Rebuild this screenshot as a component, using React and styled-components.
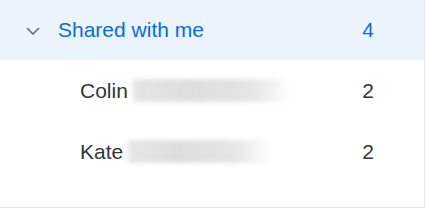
import React from "react";
import styled, { createGlobalStyle } from "styled-components";

const GlobalStyle = createGlobalStyle`
  body {
    margin: 0;
    background: #fff;
    font-family: "Liberation Sans", Arial, sans-serif;
  }
`;

const Panel = styled.div`
  width: 424px;
  height: 207px;
  border-right: 1px solid #e6e6e6;
  border-bottom: 1px solid #e6e6e6;
  display: flex;
  flex-direction: column;
`;

const Header = styled.div`
  height: 60px;
  display: flex;
  align-items: center;
  background: #ebf3fc;
  color: #0a6ed1;
  font-size: 21px;
  padding-right: 50px;
`;

const Toggle = styled.span`
  width: 58px;
  display: flex;
  justify-content: center;
  padding-left: 8px;
  box-sizing: border-box;
  margin-top: 1px;
`;

const Label = styled.span`
  flex: 1;
`;

const Count = styled.span`
  color: ${p => (p.$active ? "#0a6ed1" : "#32363a")};
`;

const Row = styled.div`
  height: 61px;
  display: flex;
  align-items: center;
  padding-left: 80px;
  padding-right: 50px;
  color: #32363a;
  font-size: 21px;
`;

const Name = styled.span`
  display: flex;
  align-items: center;
  flex: 1;
  gap: 5px;
`;

const Smudge = styled.span`
  display: block;
  height: 23px;
  width: ${p => p.$w}px;
  background: linear-gradient(
    90deg,
    #e6e6e6 0%,
    #dedede 35%,
    #e2e2e2 60%,
    #e6e6e6 75%,
    #ffffff 100%
  );
  filter: blur(2px);
`;

const people = [
  { name: "Colin", count: 2, blur: 159 },
  { name: "Kate", count: 2, blur: 143 },
];

export default function App() {
  return (
    <>
      <GlobalStyle />
      <Panel>
        <Header>
          <Toggle>
            <svg width="14" height="8" viewBox="0 0 14 8">
              <path
                d="M1 1 L7 7 L13 1"
                fill="none"
                stroke="#6a6d70"
                strokeWidth="1.6"
              />
            </svg>
          </Toggle>
          <Label>Shared with me</Label>
          <Count $active>4</Count>
        </Header>
        {people.map(p => (
          <Row key={p.name}>
            <Name>
              {p.name}
              <Smudge $w={p.blur} />
            </Name>
            <Count>{p.count}</Count>
          </Row>
        ))}
      </Panel>
    </>
  );
}
